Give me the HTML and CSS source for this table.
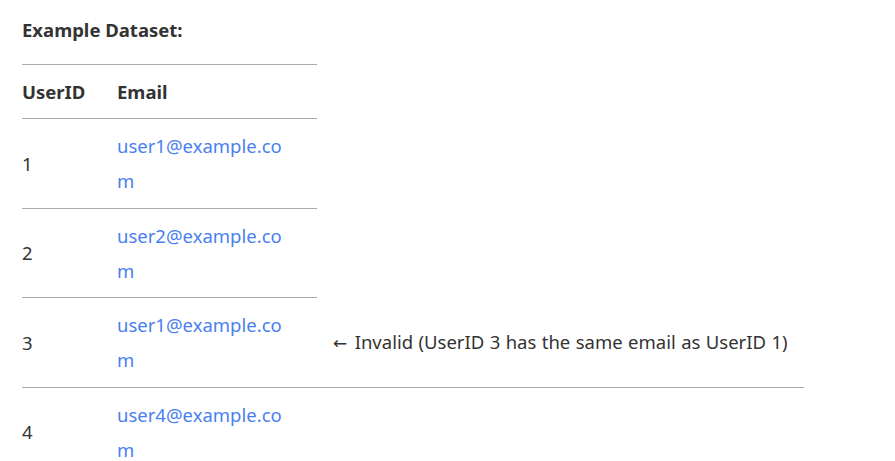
FILE: index.html
```html
<!DOCTYPE html>
<html lang="en">
<head>
<meta charset="utf-8">
<title>Example Dataset</title>
<link rel="stylesheet" href="styles.css">
</head>
<body>
<div class="page">
  <h3 class="title">Example Dataset:</h3>
  <table class="data">
    <thead>
      <tr><th class="c-id">UserID</th><th class="c-email">Email</th></tr>
    </thead>
    <tbody>
      <tr><td class="c-id">1</td><td class="c-email"><a href="#">user1@example.com</a></td></tr>
      <tr><td class="c-id">2</td><td class="c-email"><a href="#">user2@example.com</a></td></tr>
      <tr><td class="c-id">3</td><td class="c-email"><a href="#">user1@example.com</a></td><td class="c-note"><span class="arrow">←</span> Invalid (UserID 3 has the same email as UserID 1)</td></tr>
      <tr><td class="c-id">4</td><td class="c-email"><a href="#">user4@example.com</a></td></tr>
    </tbody>
  </table>
</div>
</body>
</html>
```
FILE: styles.css
```css
html, body {
  margin: 0;
  padding: 0;
  background: #fff;
}
.page {
  padding: 12px 22px 0 22px;
  font-family: "Noto Sans", "Open Sans", sans-serif;
  font-size: 18.5px;
  color: #333;
}
.title {
  margin: 0 0 16px 0;
  font-size: 18.5px;
  font-weight: 700;
  line-height: 36px;
}
.data {
  border-collapse: collapse;
}
.data th, .data td {
  padding: 9px 0;
  line-height: 35.3px;
  text-align: left;
  vertical-align: middle;
}
.data th {
  font-weight: 700;
  border-top: 1px solid #aaa;
  border-bottom: 1px solid #aaa;
  line-height: 35px;
}
.data td {
  border-bottom: 1px solid #aaa;
}
.data tbody tr:last-child td {
  border-bottom: none;
}
.c-id {
  width: 95px;
}
.c-email {
  width: 172px;
  padding-right: 28px !important;
  word-break: break-all;
}
.c-note {
  padding: 9px 16px !important;
  white-space: nowrap;
  word-spacing: 0.6px;
}
.arrow {
  font-family: "DejaVu Sans", sans-serif;
  font-size: 17px;
  margin-right: 2px;
}
.data a {
  color: #4a7ff0;
  text-decoration: none;
}
```
